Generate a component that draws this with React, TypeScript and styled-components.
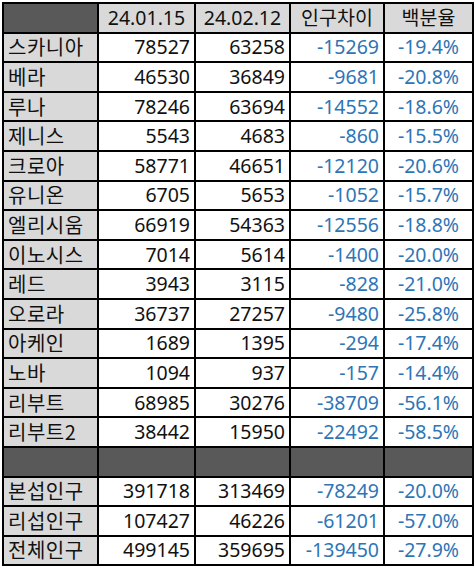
import React from "react";
import styled, { createGlobalStyle } from "styled-components";

const GlobalStyle = createGlobalStyle`
  html, body {
    margin: 0;
    padding: 0;
    background: #ffffff;
  }
  body {
    font-family: "Noto Sans", "Noto Sans CJK KR", sans-serif;
  }
`;

const kBlue = "#2e75b6";
const kDark = "#595959";
const kLight = "#d9d9d9";

const Wrap = styled.div`
  padding: 2px 0 0 2px;
`;

const Table = styled.table`
  width: 470px;
  border-collapse: collapse;
  table-layout: fixed;
  border: 2px solid #000;
  font-size: 19.5px;
  color: #111;
`;

const Row = styled.tr`
  height: 29.6px;
`;

const Cell = styled.td<{ $bg?: string; $align?: string; $blue?: boolean }>`
  border: 2px solid #000;
  padding: 0 4px;
  background: ${p => p.$bg || "#fff"};
  text-align: ${p => p.$align || "right"};
  color: ${p => (p.$blue ? kBlue : "#111")};
  white-space: nowrap;
  line-height: 24px;
  vertical-align: middle;
`;

const NameCell = styled(Cell).attrs({ $bg: kLight, $align: "left" })`
  padding-left: 4px;
  font-size: 20px;
  letter-spacing: 0.5px;
  font-family: "Noto Sans CJK KR", sans-serif;
`;

const HeadCell = styled(Cell).attrs({ $bg: kLight, $align: "center" })`
  font-family: "Noto Sans", "Noto Sans CJK KR", sans-serif;
`;

type Entry = [string, number, number, number, string];

const rows: Entry[] = [
  ["스카니아", 78527, 63258, -15269, "-19.4%"],
  ["베라", 46530, 36849, -9681, "-20.8%"],
  ["루나", 78246, 63694, -14552, "-18.6%"],
  ["제니스", 5543, 4683, -860, "-15.5%"],
  ["크로아", 58771, 46651, -12120, "-20.6%"],
  ["유니온", 6705, 5653, -1052, "-15.7%"],
  ["엘리시움", 66919, 54363, -12556, "-18.8%"],
  ["이노시스", 7014, 5614, -1400, "-20.0%"],
  ["레드", 3943, 3115, -828, "-21.0%"],
  ["오로라", 36737, 27257, -9480, "-25.8%"],
  ["아케인", 1689, 1395, -294, "-17.4%"],
  ["노바", 1094, 937, -157, "-14.4%"],
  ["리부트", 68985, 30276, -38709, "-56.1%"],
  ["리부트2", 38442, 15950, -22492, "-58.5%"],
];

const totals: Entry[] = [
  ["본섭인구", 391718, 313469, -78249, "-20.0%"],
  ["리섭인구", 107427, 46226, -61201, "-57.0%"],
  ["전체인구", 499145, 359695, -139450, "-27.9%"],
];

function DataRow({ entry }: { entry: Entry }) {
  const [name, before, after, diff, pct] = entry;
  return (
    <Row>
      <NameCell>{name}</NameCell>
      <Cell>{before}</Cell>
      <Cell>{after}</Cell>
      <Cell $blue>{diff}</Cell>
      <Cell $blue $align="center">
        {pct}
      </Cell>
    </Row>
  );
}

export default function App() {
  return (
    <>
      <GlobalStyle />
      <Wrap>
        <Table>
          <colgroup>
            <col style={{ width: 95 }} />
            <col style={{ width: 97 }} />
            <col style={{ width: 95 }} />
            <col style={{ width: 94 }} />
            <col style={{ width: 89 }} />
          </colgroup>
          <tbody>
            <Row>
              <Cell $bg={kDark} />
              <HeadCell>24.01.15</HeadCell>
              <HeadCell>24.02.12</HeadCell>
              <HeadCell>인구차이</HeadCell>
              <HeadCell>백분율</HeadCell>
            </Row>
            {rows.map(r => (
              <DataRow key={r[0]} entry={r} />
            ))}
            <Row>
              {[0, 1, 2, 3, 4].map(i => (
                <Cell key={i} $bg={kDark} />
              ))}
            </Row>
            {totals.map(r => (
              <DataRow key={r[0]} entry={r} />
            ))}
          </tbody>
        </Table>
      </Wrap>
    </>
  );
}
